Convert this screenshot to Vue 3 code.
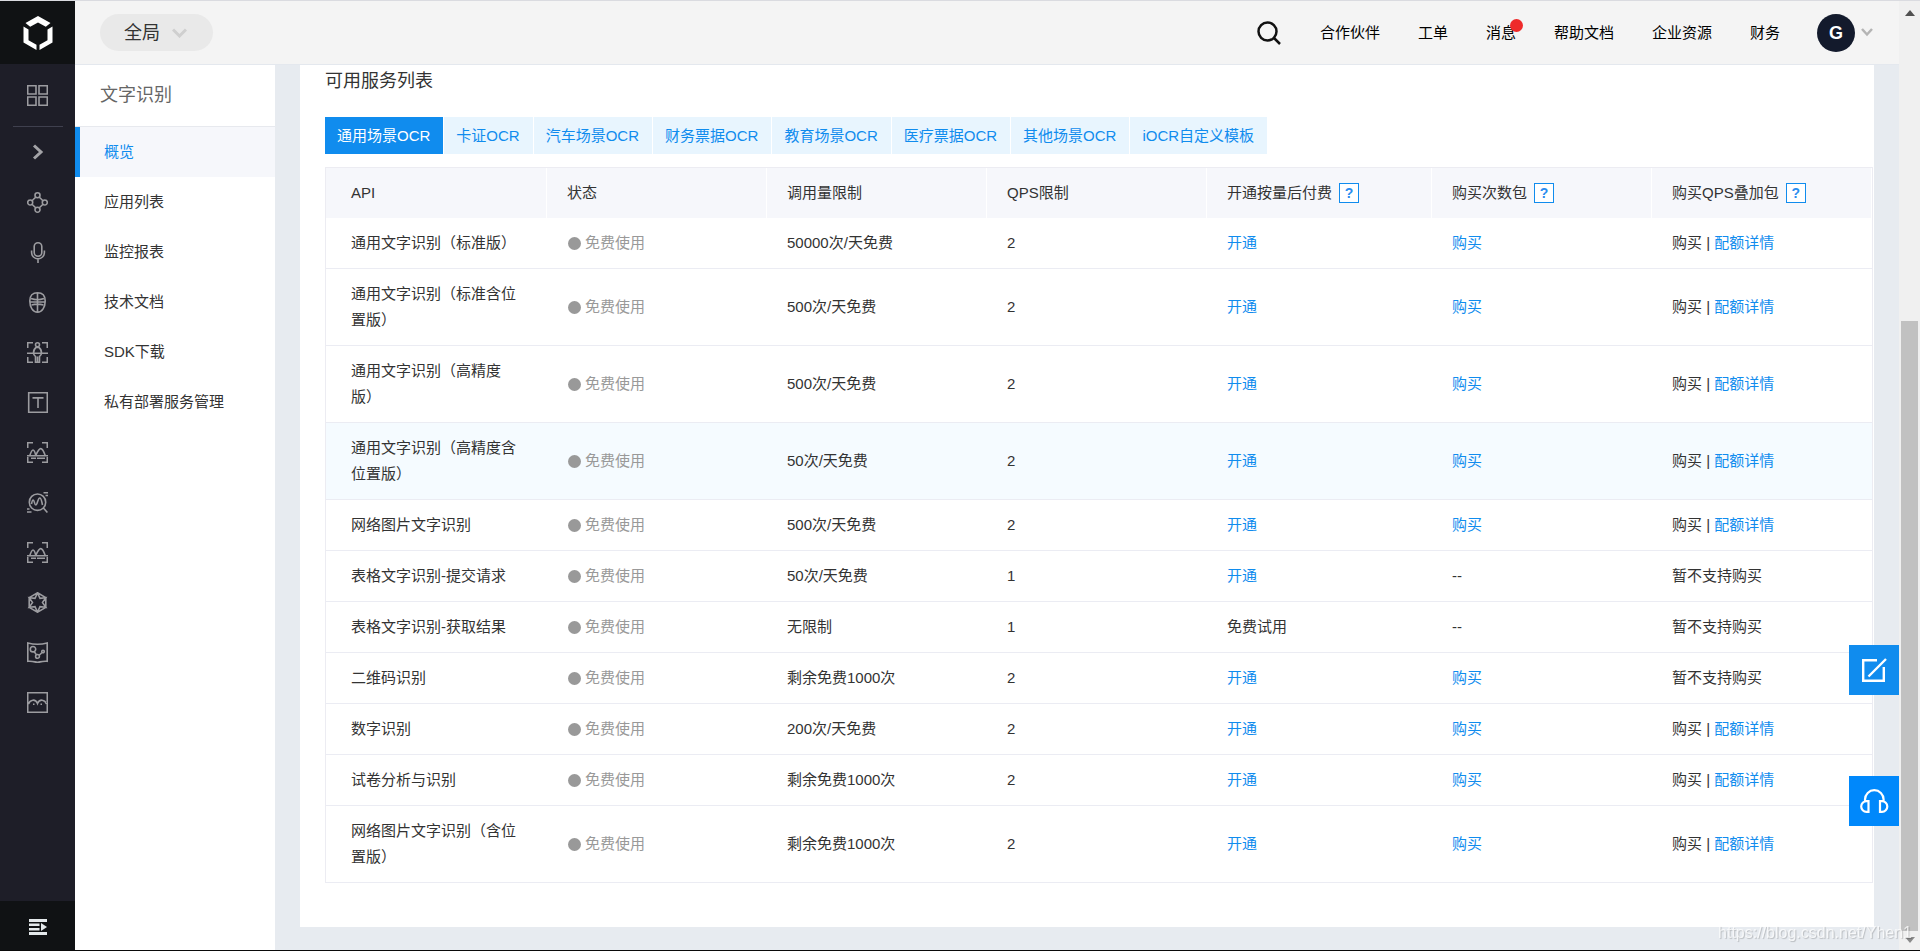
<script setup>
import { ref } from 'vue'

const navLinks = [
  { text: '合作伙伴' },
  { text: '工单' },
  { text: '消息', dot: true },
  { text: '帮助文档' },
  { text: '企业资源' },
  { text: '财务' },
]

const corners = 'M.7 6V.7H6M15 .7h5.3V6M.7 15v5.3H6M15 20.3h5.3V15'
const landscape =
  'M.7 6V.7H6M15 .7h5.3V6M0 13.7h21M.7 15v5.3H6M20.3 15v5.3H15M4 16.2h5M10 16.2h8M2.800 13.500C4 10 4.800 8 6 8s2 2 2.800 5.500M9 13C10.500 9.500 12 6.600 13.800 6.600s3 3 4.400 6.900'

const products = [
  { name: '知识图谱', d: 'M10.500.8a2.500 2.500 0 1 1 0 5 2.500 2.500 0 0 1 0-5zM10.500 15.200a2.500 2.500 0 1 1 0 5 2.500 2.500 0 0 1 0-5zM3.200 8a2.500 2.500 0 1 1 0 5 2.500 2.500 0 0 1 0-5zM17.800 8a2.500 2.500 0 1 1 0 5 2.500 2.500 0 0 1 0-5zM8.600 5.200 5 8.700M12.400 5.200 16 8.700M8.600 15.800 5 12.300M12.400 15.800l3.600-3.500' },
  { name: '语音技术', d: 'M11 .8a3.800 3.800 0 0 1 3.800 3.800v5.800a3.800 3.800 0 0 1-7.600 0V4.600A3.800 3.800 0 0 1 11 .8zM4.600 8.500v2a6.400 6.400 0 0 0 12.800 0v-2M11 17v4' },
  { name: '人脸识别', d: 'M10.500.8c4.800 0 7.700 2.800 7.700 8.200 0 6-3 11.200-7.700 11.200S2.800 15 2.800 9C2.800 3.600 5.700.8 10.500.8zM10.500 1v19M2.800 10h15.400M4 6.500c3.500 1.300 9.500 1.300 13 0M4.500 13c3.500-1 8.500-1 12 0' },
  { name: '人体分析', d: corners + 'M10.500.8a2 2 0 1 1 0 4 2 2 0 0 1 0-4zM0 11.200h21M9 5.500c-2 1.500-2.500 3.500-2.500 5.500 0 1.500.8 2.500 2 3.500v5.700h4v-5.700c1.200-1 2-2 2-3.500 0-2-.5-4-2.500-5.500zM10.500 14.500v5' },
  { name: '文字识别', d: 'M1.700.7h18.600v19.600H1.700zM6.300 6.800V5.900h9.400v.9M11 6v10' },
  { name: '图像识别', d: landscape },
  { name: '图像搜索', d: 'M10.500 2a8.200 8.200 0 1 1 0 16.400 8.200 8.200 0 0 1 0-16.400zM16.400 16l4 4.500M16.500.8H21M18.500 3.500H21M0 17h2.500M0 20h4.500M4.500 12c.5-3 1-4 1.700-4 1.200 0 1.200 5 2.600 5 1.600 0 2-7 4-7 1.500 0 1.800 3 2.700 7' },
  { name: '图像增强', d: landscape },
  { name: '机器学习', d: 'M10.500.8l8.300 4.800v9.800l-8.300 4.800-8.300-4.800V5.600zM10.500 1l2.500 5.300 5.800-.6-3.300 4.800 3.300 4.800-5.800-.6-2.500 5.300L8 14.700l-5.800.6 3.300-4.800-3.300-4.800 5.800.6z' },
  { name: '地图数据', d: 'M.8 1c6 1.600 13.400 1.600 19.400 0v18.300c-6-.5-7 1-9.700 1s-3.700-1.500-9.700-1zM6 4.500a2.700 2.700 0 1 1 0 5.400 2.700 2.700 0 0 1 0-5.400zM10.500 12.500a1.900 1.900 0 1 1 0 3.800 1.900 1.900 0 0 1 0-3.800zM16 8.200a1.300 1.300 0 1 1 0 2.600 1.300 1.300 0 0 1 0-2.600zM7.300 9.700l2.200 3.200M12 13.500l3-3' },
  { name: '内容审核', d: 'M.7.7h19.600v19.600H.7zM1.500 12C3 7.500 8.500 6.500 10.500 11.500 12.500 6.500 18 7.500 19.500 12M6 12.200h1.500M13.500 12.200H15' },
]

const menu = ['概览', '应用列表', '监控报表', '技术文档', 'SDK下载', '私有部署服务管理']

const tabs = ['通用场景OCR', '卡证OCR', '汽车场景OCR', '财务票据OCR', '教育场景OCR', '医疗票据OCR', '其他场景OCR', 'iOCR自定义模板']
const activeTab = ref(tabs[0])

const columns = [
  { title: 'API', width: 'first' },
  { title: '状态' },
  { title: '调用量限制' },
  { title: 'QPS限制' },
  { title: '开通按量后付费', help: true, width: 'wide' },
  { title: '购买次数包', help: true },
  { title: '购买QPS叠加包', help: true },
]

const rows = [
  { api: '通用文字识别（标准版）', limit: '50000次/天免费', qps: 2, open: true, buy: true, quota: true },
  { api: '通用文字识别（标准含位置版）', limit: '500次/天免费', qps: 2, open: true, buy: true, quota: true },
  { api: '通用文字识别（高精度版）', limit: '500次/天免费', qps: 2, open: true, buy: true, quota: true },
  { api: '通用文字识别（高精度含位置版）', limit: '50次/天免费', qps: 2, open: true, buy: true, quota: true, hover: true },
  { api: '网络图片文字识别', limit: '500次/天免费', qps: 2, open: true, buy: true, quota: true },
  { api: '表格文字识别-提交请求', limit: '50次/天免费', qps: 1, open: true, buy: false, quota: false },
  { api: '表格文字识别-获取结果', limit: '无限制', qps: 1, open: false, buy: false, quota: false },
  { api: '二维码识别', limit: '剩余免费1000次', qps: 2, open: true, buy: true, quota: false },
  { api: '数字识别', limit: '200次/天免费', qps: 2, open: true, buy: true, quota: true },
  { api: '试卷分析与识别', limit: '剩余免费1000次', qps: 2, open: true, buy: true, quota: true },
  { api: '网络图片文字识别（含位置版）', limit: '剩余免费1000次', qps: 2, open: true, buy: true, quota: true },
]
</script>

<template>
  <div class="page">
    <aside class="rail">
      <a class="rail-logo" href="#" aria-label="首页">
        <svg width="30" height="34" viewBox="0 0 30 34" fill="#fff">
          <path d="M15 0l12.500 7-4.700 3.800L15 6.600l-7.800 4.200L2.500 7z" />
          <path d="M.5 10.500l5 3v10.700l8 4.500V34L.5 26.500z" />
          <path d="M29.500 10.500l-5 3v10.700l-8 4.500V34l13-7.500z" />
        </svg>
      </a>
      <a class="rail-grid" href="#" aria-label="全部产品">
        <svg class="glyph" viewBox="0 0 21 21"><path d="M.7.7h8.300V9H.7zM12 .7h8.300V9H12zM.7 12h8.300v8.300H.7zM12 12h8.300v8.300H12z" /></svg>
      </a>
      <hr class="rail-line" />
      <button class="rail-item" aria-label="展开">
        <svg width="12" height="16" viewBox="0 0 12 16" fill="none" stroke="#a3a3a7" stroke-width="3"><path d="M2 1.500L9 8l-7 6.500" /></svg>
      </button>
      <a v-for="p in products" :key="p.name" class="rail-item" href="#" :aria-label="p.name">
        <svg class="glyph" viewBox="0 0 21 21"><path :d="p.d" /></svg>
      </a>
      <button class="rail-foot" aria-label="展开导航">
        <svg width="18" height="16" viewBox="0 0 18 16" fill="#e4e9eb"><path d="M0 0h18v3H0zM0 4.500h10.500v2.500H0zM0 9h10.500v2.500H0zM0 13h18v3H0zM12 4l6 4-6 4z" /></svg>
      </button>
    </aside>

    <div class="main">
      <header class="topbar">
        <button class="scope">
          全局
          <svg width="15" height="10" viewBox="0 0 15 10" fill="none" stroke="#cfcfcf" stroke-width="3"><path d="M1 1.500l6.500 6.500L14 1.500" /></svg>
        </button>
        <button class="search" aria-label="搜索">
          <svg width="24" height="24" viewBox="0 0 24 24" fill="none" stroke="#111" stroke-width="2.500"><circle cx="10.500" cy="10.500" r="9" /><path d="M17 17l6 6" /></svg>
        </button>
        <nav class="nav">
          <a v-for="l in navLinks" :key="l.text" href="#">{{ l.text }}<i v-if="l.dot" class="dot"></i></a>
        </nav>
        <button class="account" aria-label="账户">
          <span class="avatar">G</span>
          <svg width="12" height="9" viewBox="0 0 12 9" fill="none" stroke="#b4b4b4" stroke-width="2.500"><path d="M1 1l5 5.500L11 1" /></svg>
        </button>
      </header>

      <div class="body">
        <aside class="side">
          <h2 class="side-title">文字识别</h2>
          <a v-for="(m, i) in menu" :key="m" class="side-item" :class="{ active: i === 0 }" href="#">{{ m }}</a>
        </aside>
        <main class="content">
          <section class="card">
            <h3 class="card-title">可用服务列表</h3>
            <div class="tabs">
              <button v-for="t in tabs" :key="t" class="tab" :class="{ on: t === activeTab }" @click="activeTab = t">{{ t }}</button>
            </div>
            <div class="table-box">
              <table>
                <colgroup><col v-for="c in columns" :key="c.title" :class="c.width" /></colgroup>
                <thead>
                  <tr>
                    <th v-for="c in columns" :key="c.title">
                      <span class="th">{{ c.title }}<button v-if="c.help" class="help">?</button></span>
                    </th>
                  </tr>
                </thead>
                <tbody>
                  <tr v-for="r in rows" :key="r.api" :class="{ hover: r.hover }">
                    <td>{{ r.api }}</td>
                    <td><span class="status">免费使用</span></td>
                    <td>{{ r.limit }}</td>
                    <td>{{ r.qps }}</td>
                    <td><a v-if="r.open" href="#">开通</a><template v-else>免费试用</template></td>
                    <td><a v-if="r.buy" href="#">购买</a><template v-else>--</template></td>
                    <td><template v-if="r.quota">购买 | <a href="#">配额详情</a></template><template v-else>暂不支持购买</template></td>
                  </tr>
                </tbody>
              </table>
            </div>
          </section>
        </main>
      </div>
    </div>

    <div class="scroll">
      <svg width="10" height="6" viewBox="0 0 10 6" fill="#505050"><path d="M5 0l5 6H0z" /></svg>
      <div class="track"><div class="thumb"></div></div>
      <svg width="10" height="6" viewBox="0 0 10 6" fill="#8b8b8b"><path d="M5 6l5-6H0z" /></svg>
    </div>

    <button class="float edit" aria-label="反馈">
      <svg width="25" height="24" viewBox="0 0 25 24" fill="none" stroke="#fff" stroke-width="2.400"><path d="M15 2.200H1.200v20.600h20.600V9M6.500 18.500L24 1" /></svg>
    </button>
    <button class="float service" aria-label="客服">
      <svg width="30" height="24" viewBox="0 0 30 24" fill="none" stroke="#fff" stroke-width="2.200"><path d="M6 12v-1.500a9.300 9.300 0 0 1 18.600 0V12M9.500 12.200v10.600H7.500a5.300 5.300 0 0 1 0-10.600zM21 12.200v10.600h2a5.300 5.300 0 0 0 0-10.600z" /></svg>
    </button>
    <div class="watermark">https://blog.csdn.net/Yhen1</div>
  </div>
</template>

<style>
body {
  margin: 0;
  overflow: hidden;
}
</style>

<style scoped>
.page {
  display: flex;
  height: 100vh;
  box-sizing: border-box;
  border-top: 1px solid #dadbe0;
  border-bottom: 1px solid #0a0a0a;
  background: #e7ebf0;
  color: #333;
  font: 400 15px/26px "Liberation Sans", "Noto Sans CJK SC", sans-serif;
}
a {
  color: #108cee;
  text-decoration: none;
}
button {
  margin: 0;
  padding: 0;
  border: 0;
  background: none;
  color: inherit;
  font: inherit;
  cursor: pointer;
}
svg {
  display: block;
  flex: none;
}

.rail {
  display: flex;
  flex-direction: column;
  flex: none;
  width: 75px;
  background: #1e1e28;
}
.rail-logo,
.rail-grid,
.rail-item,
.rail-foot {
  display: flex;
  flex: none;
  align-items: center;
  justify-content: center;
  height: 50px;
}
.rail-logo {
  height: 63px;
  background: #101214;
}
.rail-grid {
  height: 62px;
}
.rail-line {
  flex: none;
  width: 50px;
  height: 1px;
  margin: 0 auto;
  border: 0;
  background: #3f404e;
}
.rail-foot {
  height: 49px;
  margin-top: auto;
  padding-top: 3px;
  background: #101214;
}
.glyph {
  width: 21px;
  height: 21px;
  fill: none;
  stroke: #9c9ca0;
  stroke-width: 1.6;
}

.main {
  display: flex;
  flex: 1;
  flex-direction: column;
  min-width: 0;
}
.topbar {
  display: flex;
  flex: none;
  align-items: center;
  height: 63px;
  padding: 0 26px 0 25px;
  border-bottom: 1px solid #e4e8ee;
  background: #f4f4f4;
}
.scope {
  display: flex;
  align-items: center;
  gap: 12px;
  height: 37px;
  padding: 0 26px 0 24px;
  border-radius: 19px;
  background: #e9e9e9;
  font-size: 18px;
}
.search {
  margin-left: auto;
}
.nav {
  display: flex;
  gap: 38px;
  margin: 0 37px 0 39px;
}
.nav a {
  position: relative;
  color: #000;
}
.dot {
  position: absolute;
  top: -1px;
  right: -7px;
  width: 13px;
  height: 13px;
  border-radius: 50%;
  background: #ee2a2a;
}
.account {
  display: flex;
  align-items: center;
  gap: 6px;
}
.avatar {
  width: 38px;
  height: 38px;
  border-radius: 50%;
  background: #131a2c;
  color: #fff;
  font-size: 18px;
  font-weight: bold;
  line-height: 38px;
  text-align: center;
}

.body {
  display: flex;
  flex: 1;
  min-height: 0;
}
.side {
  flex: none;
  width: 200px;
  background: #fff;
}
.side-title {
  margin: 0;
  padding-left: 25px;
  border-bottom: 1px solid #e7e9ee;
  color: #666;
  font-size: 18px;
  font-weight: 400;
  line-height: 61px;
}
.side-item {
  display: block;
  padding-left: 24px;
  border-left: 5px solid #fff;
  color: #333;
  line-height: 50px;
}
.side-item.active {
  border-color: #108cee;
  background: #f6f7fb;
  color: #108cee;
}

.content {
  flex: 1;
  min-width: 0;
  padding: 0 25px;
}
.card {
  padding: 0 1px 44px 25px;
  background: #fff;
}
.card-title {
  margin: 0 0 20px;
  font-size: 18px;
  font-weight: 400;
  line-height: 32px;
}
.tabs {
  display: flex;
  gap: 1px;
  margin-bottom: 13px;
}
.tab {
  height: 37px;
  padding: 0 13px 0 12px;
  background: #e8f5fe;
  color: #108cee;
}
.tab.on {
  background: #108cee;
  color: #fff;
}
.table-box {
  border: 1px solid #ececf2;
  border-bottom: 0;
}
table {
  width: 100%;
  border-spacing: 0;
  table-layout: fixed;
}
.first {
  width: 221px;
}
.wide {
  width: 225px;
}
th,
td {
  padding: 12px 20px;
  text-align: left;
  font-weight: 400;
}
th {
  border-right: 1px solid #fff;
  background: #f6f7fb;
}
th:first-child,
td:first-child {
  padding: 12px 25px;
}
td {
  border-bottom: 1px solid #ebecf3;
}
.hover td {
  background: #f5fbff;
}
.th {
  display: flex;
  align-items: center;
  gap: 7px;
}
.help {
  box-sizing: border-box;
  width: 20px;
  height: 20px;
  border: 1px solid #108cee;
  background: #fff;
  color: #2b8def;
  font-size: 14px;
  font-weight: bold;
  line-height: 18px;
}
.status {
  display: flex;
  align-items: center;
  gap: 4px;
  color: #999;
}
.status::before {
  width: 13px;
  height: 13px;
  margin-left: 1px;
  border-radius: 50%;
  background: #999;
  content: "";
}

.scroll {
  display: flex;
  flex: none;
  flex-direction: column;
  align-items: center;
  box-sizing: border-box;
  width: 21px;
  padding: 9px 0 7px;
  background: #f0f0f0;
}
.track {
  flex: 1;
  display: flex;
  flex-direction: column;
  justify-content: flex-end;
  padding: 5px 0 6px;
}
.thumb {
  width: 17px;
  height: 67%;
  background: #c1c1c1;
}

.float {
  position: fixed;
  right: 21px;
  display: flex;
  align-items: center;
  justify-content: center;
  width: 50px;
  height: 50px;
}
.edit {
  bottom: 256px;
  background: #108cee;
}
.service {
  bottom: 125px;
  background: #0088fb;
}
.watermark {
  position: fixed;
  right: 8px;
  bottom: 5px;
  color: rgba(255, 255, 255, 0.75);
  font-size: 16px;
  text-shadow: 1px 1px 1px rgba(0, 0, 0, 0.2);
}
</style>
